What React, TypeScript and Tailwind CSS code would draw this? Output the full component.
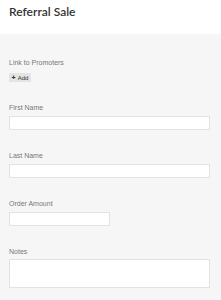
import React from 'react';

const labelCls = "block h-[9px] leading-[9px] text-[7px] text-[#777] font-['Liberation_Sans',Arial,sans-serif]";
const inputCls = "block h-[14px] bg-white border border-[#e2e2e2] outline-none";

const Field: React.FC<{ label: string; width?: string; tall?: boolean }> = ({ label, width = "w-[201px]", tall }) => (
  <div className="mt-[21px] flex flex-col">
    <label className={labelCls}>{label}</label>
    {tall ? (
      <textarea className={`mt-[3px] ${width} h-[29px] bg-white border border-[#e2e2e2] resize-none outline-none`} />
    ) : (
      <input className={`mt-[4px] ${width} ${inputCls}`} />
    )}
  </div>
);

const App: React.FC = () => {
  return (
    <div className="w-[221px] h-[300px] overflow-hidden bg-[#f6f6f6] font-['Lato',sans-serif]">
      <header className="h-[34px] bg-white px-[9px] pt-[5px]">
        <h1 className="text-[12px] leading-[14px] font-semibold text-[#333]">Referral Sale</h1>
      </header>

      <main className="px-[9px] pt-[24px]">
        <div className="flex flex-col">
          <span className={labelCls}>Link to Promoters</span>
          <button className="mt-[6px] w-[22px] h-[9px] flex items-center justify-center gap-[2px] bg-[#e4e4e4] rounded-[1px] text-[6px] leading-none text-[#333] font-['Liberation_Sans',Arial,sans-serif]">
            <span className="font-bold text-[7px]">+</span>
            <span>Add</span>
          </button>
        </div>

        <div className="mt-[2px]">
          <Field label="First Name" />
        </div>
        <Field label="Last Name" />
        <Field label="Order Amount" width="w-[101px]" />
        <Field label="Notes" tall />
      </main>
    </div>
  );
};

export default App;
